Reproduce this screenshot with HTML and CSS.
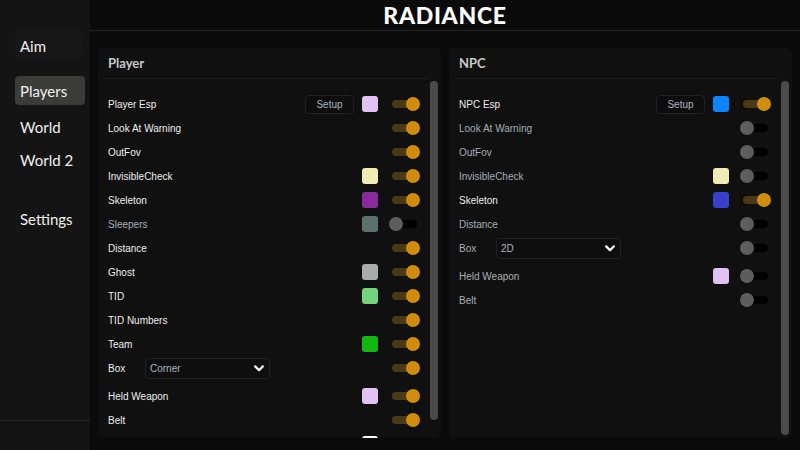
FILE: index.html
```html
<!DOCTYPE html>
<html>
<head>
<meta charset="utf-8">
<link rel="stylesheet" href="styles.css">
</head>
<body>
<div class="app">
  <aside class="sidebar">
    <nav class="nav">
      <div class="nav-item nav-aim">Aim</div>
      <div class="nav-item nav-players active">Players</div>
      <div class="nav-item nav-world">World</div>
      <div class="nav-item nav-world2">World 2</div>
      <div class="nav-item nav-settings">Settings</div>
    </nav>
    <div class="side-foot"></div>
  </aside>
  <main class="main">
    <header class="title">RADIANCE</header>
    <div class="panels">
      <section class="panel">
        <div class="panel-head">Player</div>
        <div class="sep"></div>
        <div class="panel-body">
          <div class="rows">
            <div class="row"><span class="label">Player Esp</span><span class="btn">Setup</span><span class="sw sw-lav"></span><span class="tg on"></span></div>
            <div class="row"><span class="label">Look At Warning</span><span class="sw"></span><span class="tg on"></span></div>
            <div class="row"><span class="label">OutFov</span><span class="sw"></span><span class="tg on"></span></div>
            <div class="row"><span class="label">InvisibleCheck</span><span class="sw sw-yel"></span><span class="tg on"></span></div>
            <div class="row"><span class="label">Skeleton</span><span class="sw sw-pur"></span><span class="tg on"></span></div>
            <div class="row dim"><span class="label">Sleepers</span><span class="sw sw-slate"></span><span class="tg"></span></div>
            <div class="row"><span class="label">Distance</span><span class="sw"></span><span class="tg on"></span></div>
            <div class="row"><span class="label">Ghost</span><span class="sw sw-gray"></span><span class="tg on"></span></div>
            <div class="row"><span class="label">TID</span><span class="sw sw-lgreen"></span><span class="tg on"></span></div>
            <div class="row"><span class="label">TID Numbers</span><span class="sw"></span><span class="tg on"></span></div>
            <div class="row"><span class="label">Team</span><span class="sw sw-green"></span><span class="tg on"></span></div>
            <div class="row row-combo"><span class="label label-combo">Box</span><span class="combo"><span class="combo-text">Corner</span><svg class="chev" width="10" height="7" viewBox="0 0 10 7"><polyline points="1.2,1.4 5,5.2 8.8,1.4" fill="none" stroke="#fff" stroke-width="2.2" stroke-linecap="round" stroke-linejoin="round"/></svg></span><span class="fill"></span><span class="sw"></span><span class="tg on"></span></div>
            <div class="row"><span class="label">Held Weapon</span><span class="sw sw-lav"></span><span class="tg on"></span></div>
            <div class="row"><span class="label">Belt</span><span class="sw"></span><span class="tg on"></span></div>
            <div class="row"><span class="label"></span><span class="sw sw-white"></span><span class="tg-slot"></span></div>
          </div>
          <div class="scrollbar"><div class="grab grab-long"></div></div>
        </div>
      </section>
      <section class="panel">
        <div class="panel-head">NPC</div>
        <div class="sep"></div>
        <div class="panel-body">
          <div class="rows">
            <div class="row"><span class="label">NPC Esp</span><span class="btn">Setup</span><span class="sw sw-blue"></span><span class="tg on"></span></div>
            <div class="row dim"><span class="label">Look At Warning</span><span class="sw"></span><span class="tg"></span></div>
            <div class="row dim"><span class="label">OutFov</span><span class="sw"></span><span class="tg"></span></div>
            <div class="row dim"><span class="label">InvisibleCheck</span><span class="sw sw-yel"></span><span class="tg"></span></div>
            <div class="row"><span class="label">Skeleton</span><span class="sw sw-indigo"></span><span class="tg on"></span></div>
            <div class="row dim"><span class="label">Distance</span><span class="sw"></span><span class="tg"></span></div>
            <div class="row dim row-combo"><span class="label label-combo">Box</span><span class="combo"><span class="combo-text">2D</span><svg class="chev" width="10" height="7" viewBox="0 0 10 7"><polyline points="1.2,1.4 5,5.2 8.8,1.4" fill="none" stroke="#fff" stroke-width="2.2" stroke-linecap="round" stroke-linejoin="round"/></svg></span><span class="fill"></span><span class="sw"></span><span class="tg"></span></div>
            <div class="row dim"><span class="label">Held Weapon</span><span class="sw sw-lav"></span><span class="tg"></span></div>
            <div class="row dim"><span class="label">Belt</span><span class="sw"></span><span class="tg"></span></div>
          </div>
          <div class="scrollbar"><div class="grab grab-full"></div></div>
        </div>
      </section>
    </div>
  </main>
</div>
</body>
</html>
```
FILE: styles.css
```css
* { box-sizing: border-box; }
html, body { margin: 0; padding: 0; }
body {
  width: 800px;
  height: 450px;
  overflow: hidden;
  background: #0a0a0a;
  font-family: "Lato", "Liberation Sans", sans-serif;
  color: #eeeeee;
}
.app { display: flex; width: 800px; height: 450px; }

.sidebar {
  width: 90px;
  flex: none;
  background: #141414;
  display: flex;
  flex-direction: column;
}
.nav { flex: 1; padding-top: 30px; }
.nav-item {
  margin-left: 15px;
  width: 70px;
  height: 29px;
  line-height: 30px;
  padding-left: 5px;
  border-radius: 4px;
  font-size: 15px;
  color: #f0f0f0;
}
.nav-aim { width: 68px; height: 28px; line-height: 32px; background: #171717; }
.nav-players { margin-top: 18px; }
.nav-world { margin-top: 7px; }
.nav-world2 { margin-top: 4px; }
.nav-settings { margin-top: 30px; }
.active { background: #3b3b37; }
.side-foot { height: 30px; border-top: 1px solid #232323; }

.main { flex: 1; display: flex; flex-direction: column; min-width: 0; }
.title {
  height: 31px;
  border-bottom: 1px solid #222;
  text-align: center;
  font-weight: 900;
  font-size: 23px;
  line-height: 30px;
  letter-spacing: 0.7px;
  color: #ffffff;
}
.panels {
  flex: 1;
  min-height: 0;
  display: flex;
  gap: 8px;
  padding: 17px 8px 12px;
}
.panel {
  flex: 1;
  background: #101010;
  border-radius: 5px;
  display: flex;
  flex-direction: column;
  overflow: hidden;
}
.panel-head {
  height: 30px;
  line-height: 30px;
  padding-left: 10px;
  font-weight: 700;
  font-size: 13px;
  color: #c8c8c8;
}
.sep { height: 1px; background: #1e1e1e; margin: 0 14px 0 5px; }
.panel-body { flex: 1; min-height: 0; display: flex; }
.rows {
  flex: 1;
  min-width: 0;
  padding: 13px 10px 0 10px;
  overflow: hidden;
}
.scrollbar { width: 8px; margin-right: 3px; padding-top: 2px; flex: none; }
.grab { width: 8px; background: #4a4a4a; border-radius: 4px; }
.grab-long { height: 339px; }
.grab-full { height: 354px; }

.row {
  display: flex;
  align-items: center;
  height: 24px;
  font-family: "Liberation Sans", "DejaVu Sans", sans-serif;
  font-size: 10px;
  color: #eeeeee;
}
.row.dim { color: #a6aeb6; }
.row-combo { height: 28px; padding-bottom: 4px; }
.label { flex: 1; white-space: nowrap; }
.label-combo { flex: none; width: 37px; }
.fill { flex: 1; }
.btn {
  width: 49px;
  height: 19px;
  line-height: 17px;
  border: 1px solid #222;
  border-radius: 4px;
  background: #0d0d0d;
  text-align: center;
  color: #aab4c0;
  margin-right: 8px;
}
.combo {
  width: 125px;
  height: 21px;
  border: 1px solid #222;
  border-radius: 4px;
  background: #0e0e0e;
  display: flex;
  align-items: center;
  padding: 0 5px 0 4px;
  color: #a8b4c0;
}
.combo-text { flex: 1; }
.chev { display: block; }
.sw { width: 16px; height: 16px; border-radius: 3px; margin-right: 12px; flex: none; }
.sw-lav { background: #e2c2f2; }
.sw-yel { background: #f3ebb6; }
.sw-pur { background: #8b2a9d; }
.sw-slate { background: #5b716b; }
.sw-gray { background: #a9aeab; }
.sw-lgreen { background: #74d47b; }
.sw-green { background: #10b810; }
.sw-white { background: #ffffff; }
.sw-blue { background: #0a84ff; }
.sw-indigo { background: #3b40cc; }

.tg-slot { width: 30px; height: 14px; flex: none; }
.tg { position: relative; width: 30px; height: 14px; flex: none; }
.tg::before {
  content: "";
  position: absolute;
  left: 3px; right: 3px; top: 3px; height: 8px;
  border-radius: 4px;
  background: #000;
}
.tg::after {
  content: "";
  position: absolute;
  left: -1px; top: 0;
  width: 14px; height: 14px;
  border-radius: 50%;
  background: #5d5d5d;
}
.tg.on::before { left: 2px; right: 7px; background: #4a3912; }
.tg.on::after { left: auto; right: 0; background: #d08c0c; }
```
